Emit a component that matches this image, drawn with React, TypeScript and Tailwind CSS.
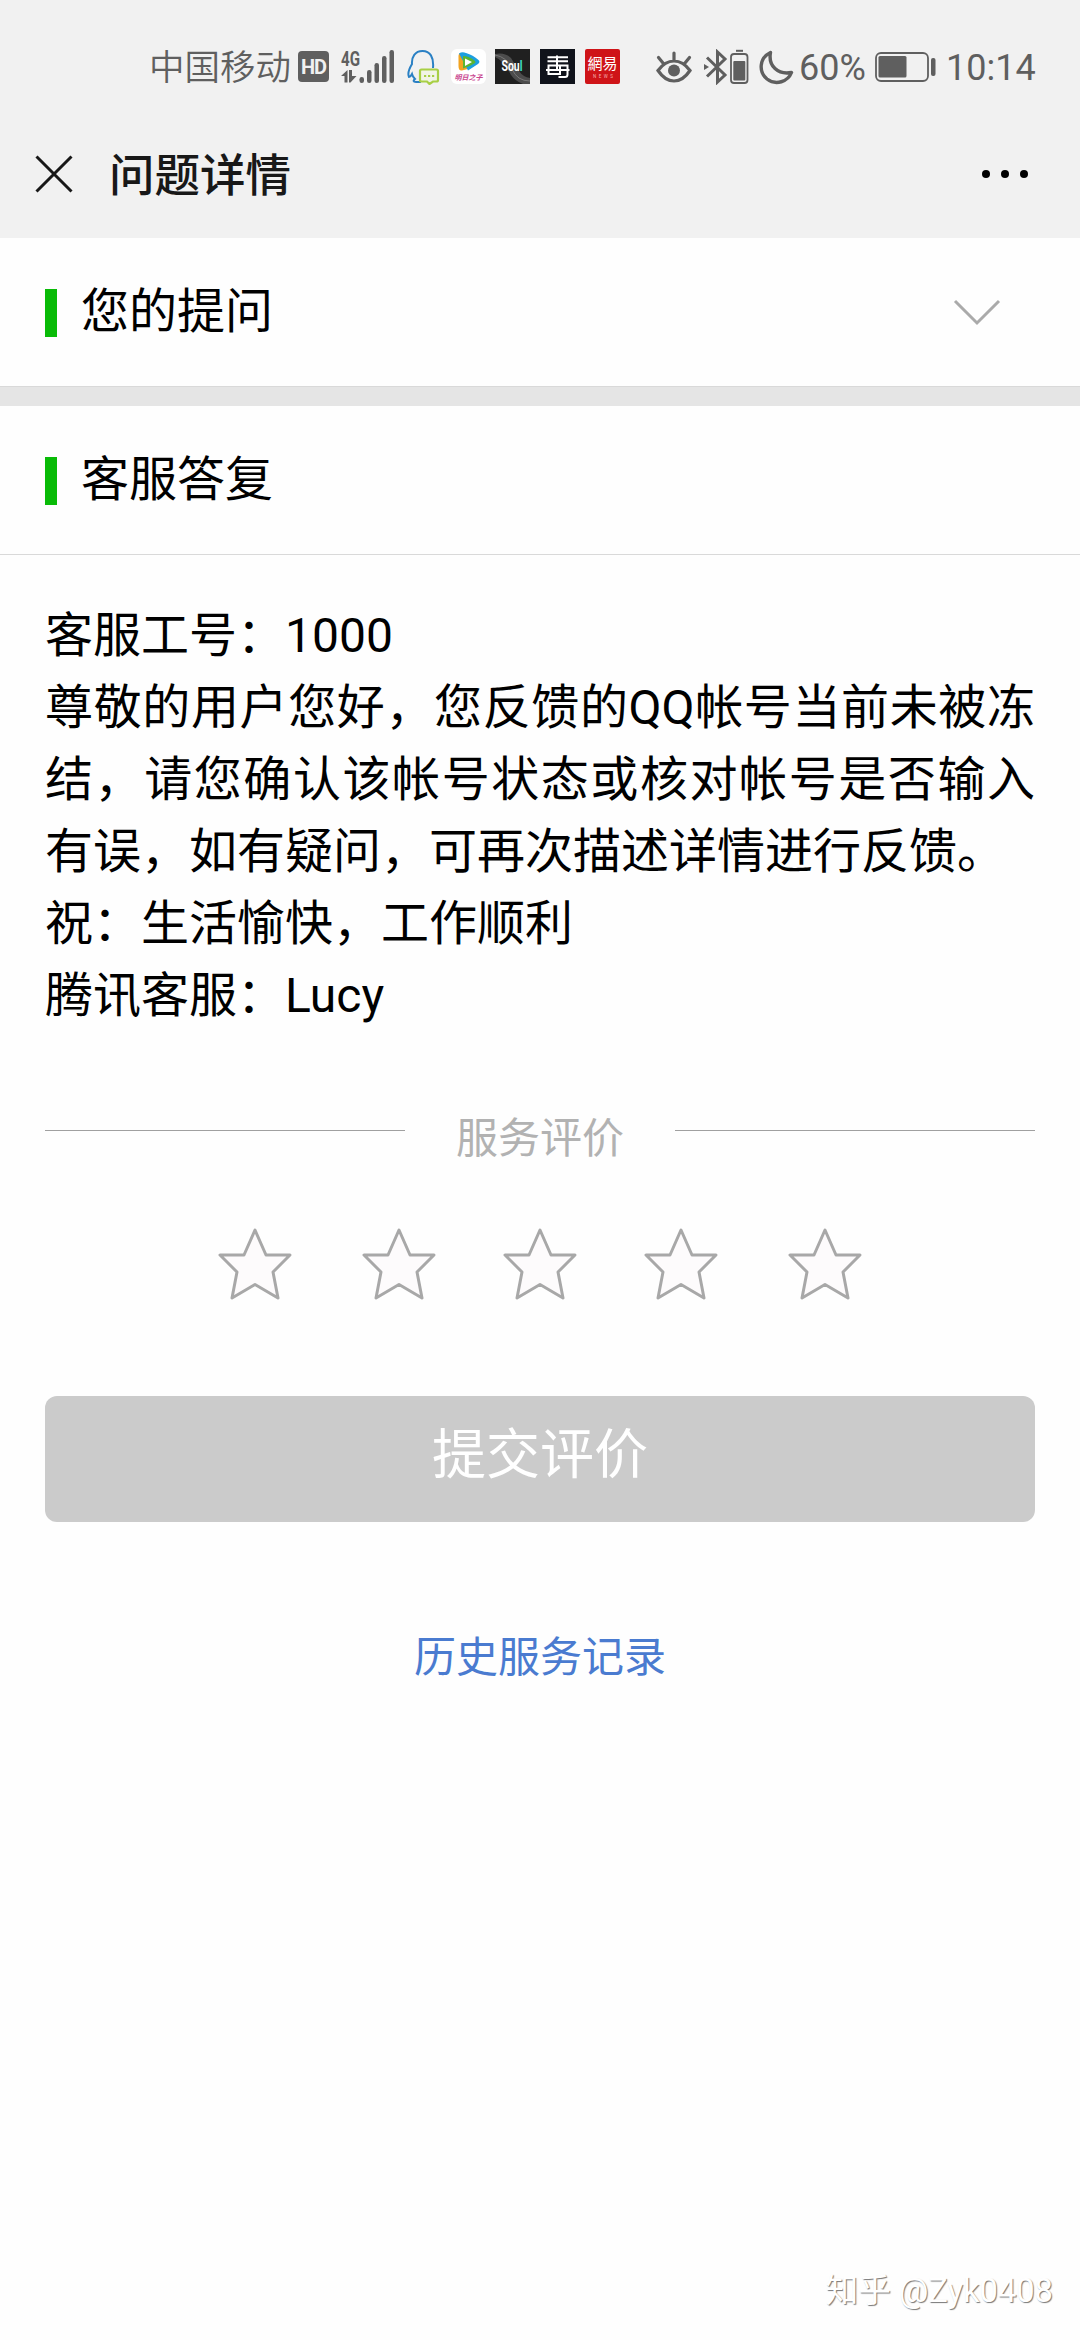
import React from "react";

const STAR = "M37 3 L48 28 L72 28 L55 45 L60 71 L37 57.500 L14 71 L19 45 L2 28 L26 28 Z";

function Signal() {
  return (
    <svg className="ml-[12px] h-[36px] w-[54px] overflow-visible" viewBox="0 0 54 36" fill="#5f5f5f">
      <text x="0" y="16.500" fontSize="19.500" fontWeight="700" fontFamily="Roboto, sans-serif" textLength="19" lengthAdjust="spacingAndGlyphs">4G</text>
      <path d="M0 27 L6.500 21 V33.500 H3.500 V27 Z M8 21 H11 V27 H15.500 L9.500 33.500 H8 Z" />
      <rect x="18.500" y="28" width="4.500" height="6" rx="2.200" />
      <rect x="26" y="21" width="4.500" height="13" rx="2.200" />
      <rect x="33.500" y="14" width="4.500" height="20" rx="2.200" />
      <rect x="41" y="7" width="4.500" height="27" rx="2.200" />
      <rect x="48.500" y="1" width="4.500" height="33" rx="2.200" />
    </svg>
  );
}

function QQIcon() {
  return (
    <svg className="ml-[12px] h-[36px] w-[33px]" viewBox="0 0 33 36" fill="none">
      <path d="M26 19 C27 8 23 2 15.500 2 C8 2 4.500 8 5 15 C2 20 .5 25 2 28 C3 28 4 27 5 25 C5.500 27 6.500 28.500 8 30 C6 31.500 6 33 9 33 H14" stroke="#2a80c4" strokeWidth="2" />
      <path d="M14.500 20.500 H29.500 Q31 20.500 31 22 V31 Q31 32.500 29.500 32.500 H26 L22.500 35 L20 32.500 H14.500 Q13 32.500 13 31 V22 Q13 20.500 14.500 20.500Z" fill="#f1f4e6" stroke="#a8cf45" strokeWidth="2.200" />
      <path d="M17 27h2.200 M21 27h2.200 M25 27h2.200" stroke="#a8cf45" strokeWidth="2.200" />
    </svg>
  );
}

function VideoIcon() {
  return (
    <svg className="ml-[11px] size-[35px]" viewBox="0 0 35 35">
      <rect width="35" height="35" rx="6" fill="#fff" />
      <path d="M10 4 Q7 4 7.500 9 V17 Q7.500 22 11 21.500 Q18 20 23 17 L13 4.500 Q12 4 10 4Z" fill="#f2a320" />
      <path d="M8 4.500 Q11 2.500 15 4 Q22 6 27.500 11 Q29.500 13 27 15 L17 21.500 Z" fill="#1c9fe0" />
      <path d="M12 7 Q18 7 24 12 Q25 13 24 14 Q18 18 12 19.500Z" fill="#5cb531" />
      <path d="M14 9.500 L21 13 L14 17Z" fill="#fff" />
      <text x="3.500" y="31" fontSize="7" fontWeight="700" fontStyle="italic" fill="#c9468f" fontFamily="'Noto Sans CJK SC', sans-serif" textLength="28" lengthAdjust="spacingAndGlyphs">明日之子</text>
    </svg>
  );
}

function SoulIcon() {
  return (
    <svg className="ml-[9px] size-[35px]" viewBox="0 0 35 35">
      <rect width="35" height="35" fill="#202020" />
      <path d="M0 5 Q10 3 16 9 L24 22 Q28 28 35 29 V35 H28 Q20 32 16 26 Q8 11 0 8Z" fill="#4c4c4c" />
      <path d="M0 6 Q12 8 17 20 T35 32" stroke="#777" fill="none" />
      <text x="6.500" y="21.500" fontSize="14" fontWeight="700" fill="#fff" fontFamily="Roboto, sans-serif" textLength="21" lengthAdjust="spacingAndGlyphs">Sou<tspan fill="#3fe0c5">l</tspan></text>
    </svg>
  );
}

function DuIcon() {
  return (
    <svg className="ml-[10px] size-[35px]" viewBox="0 0 35 35" fill="none" stroke="#fff" strokeWidth="2">
      <rect width="35" height="35" fill="#10131b" stroke="none" />
      <path d="M7.500 8.300H28 M7.500 12.300H28 M7.500 16.500H27.500V25.500 Q27.500 28 25 28H18.500 M6 21H29.500 M8.500 16.500V25H21 M17 6.500V20 M20 17V25" />
    </svg>
  );
}

function NewsIcon() {
  return (
    <svg className="ml-[10px] size-[35px]" viewBox="0 0 35 35">
      <rect width="35" height="35" rx="2" fill="#cf1418" />
      <text x="2.500" y="20" fontSize="15" fill="#fff" fontFamily="'Noto Sans CJK TC', sans-serif" textLength="30" lengthAdjust="spacingAndGlyphs">網易</text>
      <text x="8" y="28.500" fontSize="4.500" fill="#f3b0b0" fontFamily="Roboto, sans-serif" textLength="20">NEWS</text>
    </svg>
  );
}

function StatusBar() {
  return (
    <div className="flex h-[133px] items-center pl-[149px] text-[#5f5f5f]">
      <span className="mt-[2px] w-[144px] text-[35.5px] font-[350] leading-[40px]">中国移动</span>
      <span className="ml-[5px] flex h-[31px] w-[31px] items-center justify-center rounded-[4px] bg-[#5f5f5f] text-[20px] font-bold leading-none tracking-[-1px] text-[#f1f1f1]">HD</span>
      <Signal />
      <QQIcon />
      <VideoIcon />
      <SoulIcon />
      <DuIcon />
      <NewsIcon />
      <svg className="ml-[36px] h-[34px] w-[36px]" viewBox="0 0 36 34" fill="none" stroke="#5f5f5f" strokeWidth="3.200" strokeLinecap="round">
        <path d="M2 20.500 Q9 11 18 11 T34 20.500 Q27 31 18 31 T2 20.500Z M18 10V3 M7 13 L2.500 7.500 M29 13 L33.500 7.500" />
        <circle cx="18" cy="20.500" r="6" fill="#5f5f5f" stroke="none" />
      </svg>
      <svg className="ml-[12px] h-[36px] w-[46px]" viewBox="0 0 46 36" fill="none" stroke="#5f5f5f">
        <path d="M3 8.500 L21 26 L13.500 33 V3 L21 10 L3 27.500" strokeWidth="3" />
        <path d="M0 15 L5 18 L0 21Z" fill="#5f5f5f" stroke="none" />
        <rect x="27" y="5" width="16.500" height="29" rx="3" strokeWidth="1.800" />
        <rect x="29.300" y="12" width="12" height="19.500" rx="1" fill="#5f5f5f" stroke="none" />
        <path d="M32 1.800H39" strokeWidth="2" />
      </svg>
      <svg className="ml-[9px] h-[36px] w-[36px]" viewBox="0 0 36 36" fill="none" stroke="#5f5f5f" strokeWidth="3.400" strokeLinejoin="round">
        <path d="M11.500 3.500 C0 9 -.5 23 8 30 C17 37 29 32.500 32.500 23.500 C19 26 9 17 11.500 3.500Z" />
      </svg>
      <span className="ml-[4px] mt-[2px] w-[75px] text-[36px] leading-[40px]">60%</span>
      <svg className="ml-px h-[30px] w-[61px]" viewBox="0 0 61 30" fill="none">
        <rect x="1" y="1" width="52" height="28" rx="5" stroke="#5f5f5f" strokeWidth="1.800" />
        <rect x="3.500" y="4" width="28" height="21.500" rx="1.500" fill="#5f5f5f" />
        <rect x="56" y="6" width="4.500" height="18" rx="2" fill="#5f5f5f" />
      </svg>
      <span className="ml-[10px] mt-[2px] text-[36px] leading-[40px]">10:14</span>
    </div>
  );
}

function TitleBar() {
  return (
    <div className="flex h-[105px] items-center pb-[23px] pl-[35px] pr-[52px]">
      <svg className="size-[38px]" viewBox="0 0 38 38" fill="none" stroke="#181818" strokeWidth="3">
        <path d="M1.500 1.500 L36.500 36.500 M36.500 1.500 L1.500 36.500" />
      </svg>
      <h1 className="ml-[36px] mt-[6px] text-[45.5px] font-medium leading-[60px] text-[#181818]">问题详情</h1>
      <div className="ml-auto flex gap-[11px]">
        <i className="size-[8px] rounded-full bg-black" />
        <i className="size-[8px] rounded-full bg-black" />
        <i className="size-[8px] rounded-full bg-black" />
      </div>
    </div>
  );
}

function SectionHeader({ title, children }: { title: string; children?: React.ReactNode }) {
  return (
    <div className="flex h-[149px] items-center border-b border-[#d9d9d9] pl-[45px] pr-[79px]">
      <i className="mt-[2px] h-[48px] w-[12px] bg-[#09bb07]" />
      <h2 className="ml-[24px] text-[48px] leading-[72px]">{title}</h2>
      {children}
    </div>
  );
}

export default function App() {
  return (
    <div className="flex h-[2340px] w-[1080px] flex-col overflow-hidden bg-[#fefefe] font-[Roboto,'Noto_Sans_CJK_SC',sans-serif] text-black" lang="zh-CN">
      <header className="bg-[#f1f1f1]">
        <StatusBar />
        <TitleBar />
      </header>
      <SectionHeader title="您的提问">
        <svg className="ml-auto h-[28px] w-[48px]" viewBox="0 0 48 28" fill="none" stroke="#aaa" strokeWidth="3">
          <path d="M2 3 L24 25 L46 3" />
        </svg>
      </SectionHeader>
      <div className="h-[19px] bg-[#e5e5e5]" />
      <SectionHeader title="客服答复" />
      <main className="flex flex-1 flex-col px-[45px] pt-[45px]">
        <div className="text-justify text-[48px] leading-[72px]">
          <p>客服工号：1000</p>
          <p>尊敬的用户您好，您反馈的QQ帐号当前未被冻结，请您确认该帐号状态或核对帐号是否输入有误，如有疑问，可再次描述详情进行反馈。</p>
          <p>祝：生活愉快，工作顺利</p>
          <p>腾讯客服：Lucy</p>
        </div>
        <div className="mt-[68px] flex h-[60px] items-start justify-between">
          <i className="mt-[30px] h-px w-[360px] bg-[#a0a0a0]" />
          <span className="mt-[9px] text-[42px] leading-[60px] text-[#b2b2b2]">服务评价</span>
          <i className="mt-[30px] h-px w-[360px] bg-[#a0a0a0]" />
        </div>
        <div className="mt-[67px] flex pl-[173px]">
          {["mr-[70px]", "mr-[67px]", "mr-[67px]", "mr-[70px]", ""].map((gap, i) => (
            <svg key={i} className={`h-[74px] w-[74px] ${gap}`} viewBox="0 0 74 74" fill="#fdfbfc" stroke="#a8a8a8" strokeWidth="3" strokeLinejoin="round">
              <path d={STAR} />
            </svg>
          ))}
        </div>
        <button className="mt-[95px] h-[126px] rounded-[12px] bg-[#cbcbcb] pb-[8px] text-[54px] text-white">提交评价</button>
        <a className="mt-[106px] text-center text-[42px] leading-[60px] text-[#4a7bd0]">历史服务记录</a>
        <div className="-mr-[18px] mb-[25px] mt-auto self-end text-[32.7px] leading-[48px] text-white [text-shadow:1px_1px_1px_#777]">知乎 @Zyk0408</div>
      </main>
    </div>
  );
}
